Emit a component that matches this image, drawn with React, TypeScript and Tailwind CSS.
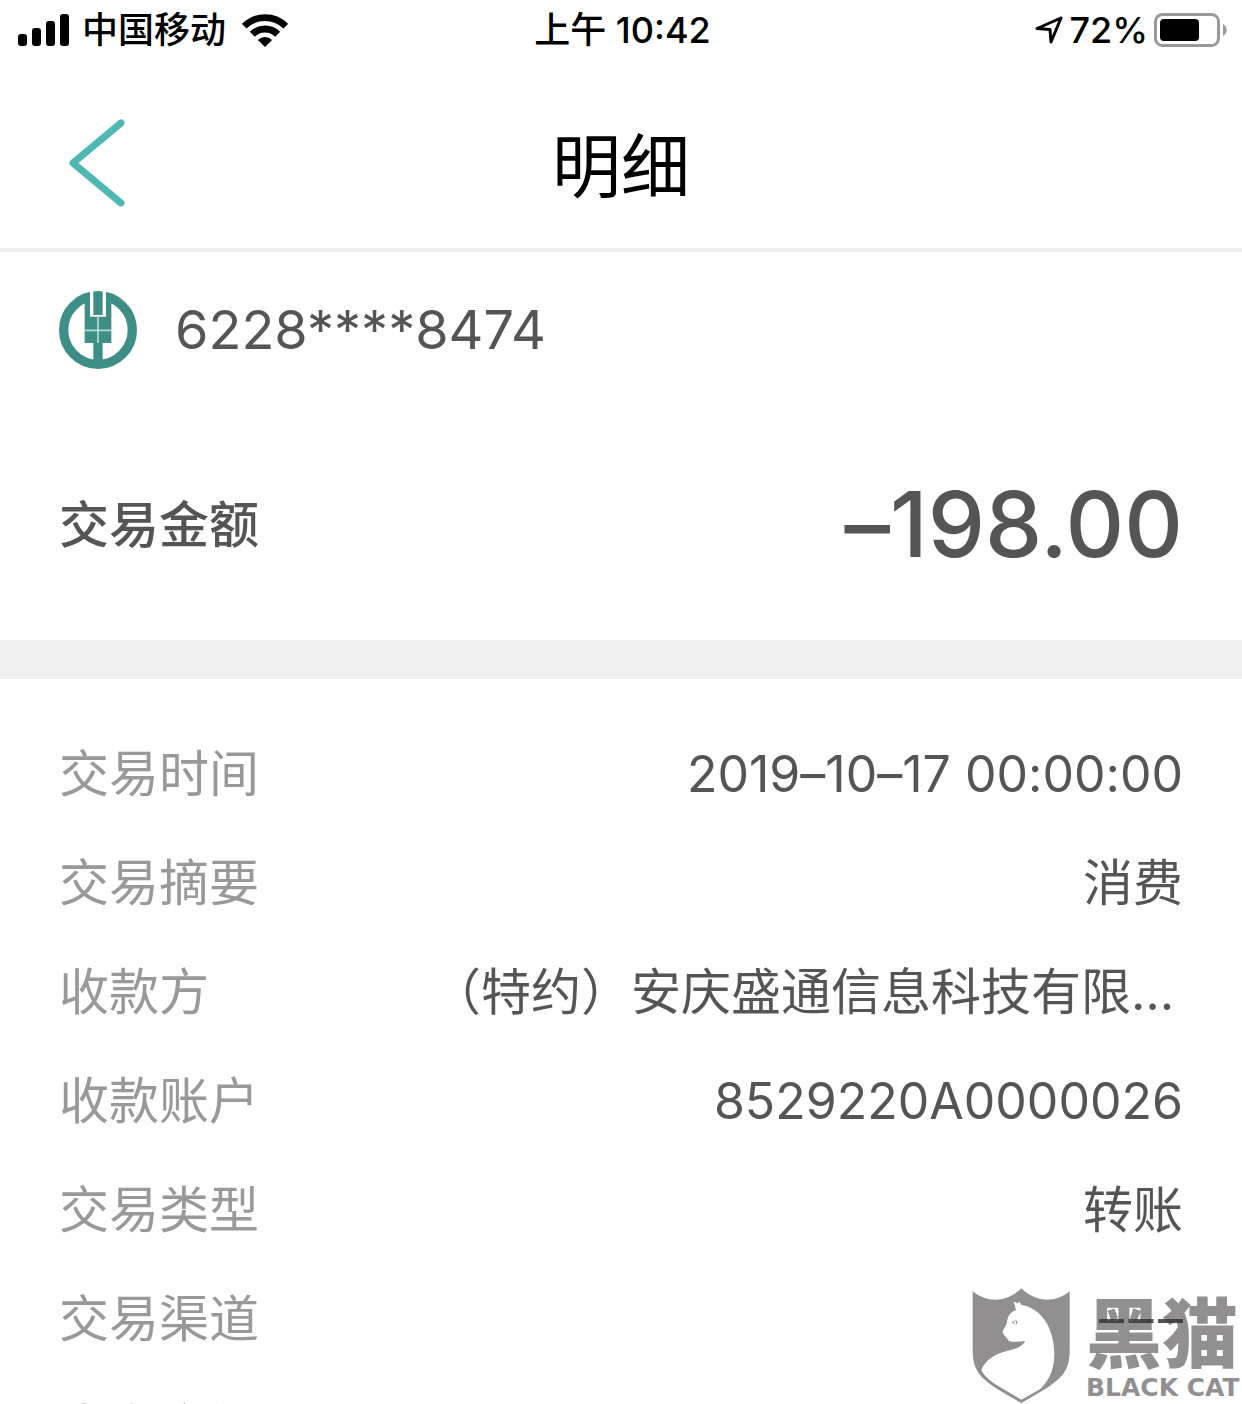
import React from 'react';
import clsx from 'clsx';

interface Detail {
  label: string;
  value: string;
}

const details: Detail[] = [
  { label: '交易时间', value: '2019–10–17 00:00:00' },
  { label: '交易摘要', value: '消费' },
  { label: '收款方', value: '（特约）安庆盛通信息科技有限公司' },
  { label: '收款账户', value: '8529220A0000026' },
  { label: '交易类型', value: '转账' },
  { label: '交易渠道', value: '–\u200A–\u200A–' },
  { label: '本次余额', value: '' },
];

const SignalIcon: React.FC = () => (
  <svg className="h-8 w-13" viewBox="0 0 52 32" fill="currentColor" aria-hidden="true">
    <rect x="0" y="20" width="9" height="12" rx="3" />
    <rect x="14" y="14" width="9" height="18" rx="3" />
    <rect x="28" y="7" width="9" height="25" rx="3" />
    <rect x="42" y="0" width="9" height="32" rx="3" />
  </svg>
);

const WifiIcon: React.FC = () => (
  <svg className="h-[33px] w-[46px]" viewBox="0 0 46 33" fill="none" stroke="currentColor" aria-hidden="true">
    <path d="M2.2 12.2A29.5 29.5 0 0 1 43.8 12.2" strokeWidth="6.6" />
    <path d="M10.3 20.3A18 18 0 0 1 35.7 20.3" strokeWidth="7" />
    <path d="M23 33L15.9 25.9A10 10 0 0 1 30.1 25.9Z" fill="currentColor" stroke="none" />
  </svg>
);

const LocationIcon: React.FC = () => (
  <svg className="h-7 w-7" viewBox="0 0 28 28" fill="none" stroke="currentColor" strokeWidth="3" strokeLinejoin="round" aria-hidden="true">
    <path d="M2 12.5L26 2L16 26L15 13.5Z" />
  </svg>
);

const BatteryIcon: React.FC = () => (
  <svg className="h-[34px] w-[73px]" viewBox="0 0 73 34" aria-hidden="true">
    <rect x="1.5" y="1.5" width="63" height="31" rx="7" fill="none" stroke="#999" strokeWidth="3" />
    <rect x="6" y="6" width="39" height="22" rx="4" fill="#000" />
    <path d="M69 11C74 14 74 20 69 23Z" fill="#999" />
  </svg>
);

const BankLogo: React.FC = () => (
  <svg className="h-[78px] w-[78px]" viewBox="54 33 234 234" role="img" aria-label="中国农业银行">
    <circle cx="171" cy="150" r="103" fill="none" stroke="#3d8f86" strokeWidth="28" />
    <path d="M131 44H211V189H185V262H157V189H131Z" fill="#3d8f86" />
    <path d="M147 30H157V105H185V30H195V110H147Z" fill="#fff" />
    <path d="M171 108V189M131 151H211" stroke="#b5dcd8" strokeWidth="5" />
  </svg>
);

const ShieldCat: React.FC = () => (
  <svg className="h-[116px] w-[98px]" viewBox="38 26 294 348" aria-hidden="true">
    <path
      fill="currentColor"
      fillRule="evenodd"
      d="M40 36C84 72 142 70 186 27C230 70 288 72 331 36V212C331 290 296 308 186 371C76 308 40 290 40 212Z
        M163 66L170 92C154 97 144 112 143 128C141 141 131 148 130 159C132 168 144 176 149 185C166 190 182 186 198 185C182 214 148 207 108 228C86 240 73 254 66 273C76 292 94 306 113 318L186 361L243 329C272 300 285 268 285 222C283 146 248 88 187 77L178 66L176 73Z"
    />
    <path fill="currentColor" d="M157 129L167 122L163 129L168 137ZM168 122L175 127L171 136Z" />
  </svg>
);

const Watermark: React.FC = () => (
  <div className="pointer-events-none absolute right-0 bottom-0 flex items-end gap-4 text-[#383436] opacity-55">
    <ShieldCat />
    <div className="flex w-[156px] flex-col font-black">
      <span className="text-[76px] leading-[76px]">黑猫</span>
      <span className="font-['DejaVu_Sans',sans-serif] text-[25px] leading-8 font-bold whitespace-nowrap">BLACK CAT</span>
    </div>
  </div>
);

const App: React.FC = () => {
  return (
    <div className="relative h-screen overflow-hidden bg-white font-['Inter','Noto_Sans_CJK_SC',sans-serif] text-[#555]">
      <div className="grid h-15 grid-cols-3 items-center pr-[15px] pl-[18px] text-4xl font-medium text-black">
        <div className="flex items-center gap-3">
          <SignalIcon />
          <div className="flex items-center gap-4">
            <span>中国移动</span>
            <WifiIcon />
          </div>
        </div>
        <span className="text-center">上午 10:42</span>
        <div className="flex items-center justify-end gap-1.5">
          <LocationIcon />
          <span>72%</span>
          <BatteryIcon />
        </div>
      </div>

      <header className="grid h-48 grid-cols-3 items-center border-b-4 border-[#f0f0f0] px-15 pt-5">
        <button type="button" aria-label="返回" className="justify-self-start px-2 text-[#4fb8b3]">
          <svg className="h-[90px] w-15" viewBox="0 0 60 90" fill="none" stroke="currentColor" strokeWidth="7" strokeLinecap="round" strokeLinejoin="round">
            <path d="M53 4L5 44L53 84" />
          </svg>
        </button>
        <h1 className="pt-1.5 text-center text-[69px] leading-none text-black">明细</h1>
      </header>

      <section className="h-[388px] px-[59px] pt-[39px]">
        <div className="flex items-center gap-[38px]">
          <BankLogo />
          <span className="text-[54px] leading-none [font-feature-settings:'calt'_0]">6228****8474</span>
        </div>
        <div className="flex items-center justify-between pt-[110px]">
          <h2 className="text-[50px] leading-none font-medium">交易金额</h2>
          <span className="text-[91px] leading-none font-medium [font-feature-settings:'calt'_0]">–198.00</span>
        </div>
      </section>

      <div className="h-[39px] bg-[#f0f0f0]" />

      <dl className="px-[59px] pt-10 text-[50px]">
        {details.map((detail) => (
          <div key={detail.label} className="flex h-[109px] items-center justify-between leading-[72px]">
            <dt className="shrink-0 text-[#999]">{detail.label}</dt>
            <dd className={clsx("truncate [font-feature-settings:'calt'_0]", detail.label === '收款方' && 'w-[752px]')}>
              {detail.value}
            </dd>
          </div>
        ))}
      </dl>

      <Watermark />
    </div>
  );
};

export default App;
